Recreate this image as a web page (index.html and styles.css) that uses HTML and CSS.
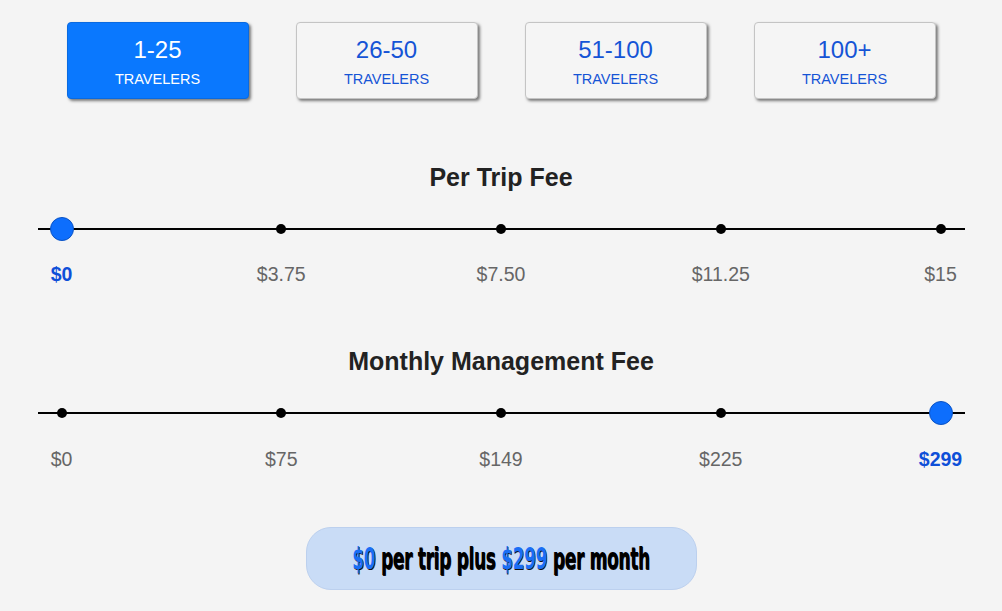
FILE: index.html
```html
<!DOCTYPE html>
<html lang="en">
<head>
<meta charset="utf-8">
<title>Pricing</title>
<link rel="stylesheet" href="styles.css">
</head>
<body>
<div class="page">
  <div class="tiers">
    <button class="tier active"><span class="num">1-25</span><span class="cap">TRAVELERS</span></button>
    <button class="tier"><span class="num">26-50</span><span class="cap">TRAVELERS</span></button>
    <button class="tier"><span class="num">51-100</span><span class="cap">TRAVELERS</span></button>
    <button class="tier"><span class="num">100+</span><span class="cap">TRAVELERS</span></button>
  </div>

  <section class="fee first">
    <h2 class="title">Per Trip Fee</h2>
    <div class="track">
      <span class="stop"><span class="knob"></span></span>
      <span class="stop"><span class="dot"></span></span>
      <span class="stop"><span class="dot"></span></span>
      <span class="stop"><span class="dot"></span></span>
      <span class="stop"><span class="dot"></span></span>
    </div>
    <div class="labels">
      <span class="lab sel">$0</span>
      <span class="lab">$3.75</span>
      <span class="lab">$7.50</span>
      <span class="lab">$11.25</span>
      <span class="lab">$15</span>
    </div>
  </section>

  <section class="fee second">
    <h2 class="title">Monthly Management Fee</h2>
    <div class="track">
      <span class="stop"><span class="dot"></span></span>
      <span class="stop"><span class="dot"></span></span>
      <span class="stop"><span class="dot"></span></span>
      <span class="stop"><span class="dot"></span></span>
      <span class="stop"><span class="knob"></span></span>
    </div>
    <div class="labels">
      <span class="lab">$0</span>
      <span class="lab">$75</span>
      <span class="lab">$149</span>
      <span class="lab">$225</span>
      <span class="lab sel">$299</span>
    </div>
  </section>

  <div class="summary">
    <span class="sumtext"><span class="hl">$0</span> per trip plus <span class="hl">$299</span> per month</span>
  </div>
</div>
</body>
</html>
```
FILE: styles.css
```css
* { box-sizing: border-box; }
html, body { margin: 0; padding: 0; }
body {
  background: #f4f4f4;
  font-family: "Liberation Sans", Arial, sans-serif;
  width: 1002px;
  height: 611px;
  overflow: hidden;
}
.page {
  display: flex;
  flex-direction: column;
  align-items: center;
}
.tiers {
  display: flex;
  gap: 47px;
  padding-top: 22px;
}
.tier {
  width: 182px;
  height: 77px;
  border: 1px solid #c4c4c4;
  border-radius: 4px;
  background: #f5f5f5;
  box-shadow: 2px 2px 3px rgba(0,0,0,0.5);
  display: flex;
  flex-direction: column;
  align-items: center;
  padding: 14px 0 0;
  font-family: "Liberation Sans", Arial, sans-serif;
  color: #1554d6;
  cursor: pointer;
}
.tier.active {
  background: #0a78fe;
  border-color: #0a6ae0;
  color: #ffffff;
}
.num {
  font-size: 24px;
  line-height: 26px;
}
.cap {
  font-size: 14.5px;
  line-height: 16px;
  margin-top: 8px;
}
.fee {
  display: flex;
  flex-direction: column;
  align-items: center;
}
.fee.first { margin-top: 64px; }
.fee.second { margin-top: 62px; }
.title {
  margin: 0;
  font-size: 25px;
  line-height: 28px;
  font-weight: bold;
  color: #222;
}
.track {
  position: relative;
  width: 927px;
  height: 24px;
  margin-top: 26px;
  padding: 0 14px;
  display: flex;
  justify-content: space-between;
  align-items: center;
}
.track::before {
  content: "";
  position: absolute;
  left: 0;
  right: 0;
  top: 11px;
  height: 2px;
  background: #000;
}
.stop {
  position: relative;
  width: 20px;
  height: 24px;
  display: flex;
  justify-content: center;
  align-items: center;
}
.dot {
  width: 10px;
  height: 10px;
  border-radius: 50%;
  background: #000;
}
.knob {
  width: 24px;
  height: 24px;
  flex: none;
  border-radius: 50%;
  background: #0d6efd;
  border: 1px solid #0a52c4;
}
.labels {
  width: 927px;
  padding: 0 14px;
  margin-top: 22px;
  display: flex;
  justify-content: space-between;
}
.second .labels { margin-top: 23px; }
.lab {
  width: 20px;
  display: flex;
  justify-content: center;
  white-space: nowrap;
  font-size: 19.5px;
  line-height: 22px;
  color: #666;
}
.lab.sel {
  color: #0e4fd8;
  font-weight: bold;
}
.summary {
  margin-top: 57px;
  width: 391px;
  height: 63px;
  border-radius: 25px;
  background: #c9dcf6;
  border: 1px solid #bcd0ee;
  display: flex;
  justify-content: center;
  align-items: center;
}
.sumtext {
  display: inline-block;
  font-family: "DejaVu Sans", sans-serif;
  font-weight: bold;
  font-stretch: condensed;
  font-size: 30px;
  line-height: 34px;
  color: #000;
  white-space: nowrap;
  transform: scaleX(0.63);
  letter-spacing: -0.5px;
  text-shadow: 1px 1px 0 #111;
}
.hl { color: #1a6ef5; }
```
